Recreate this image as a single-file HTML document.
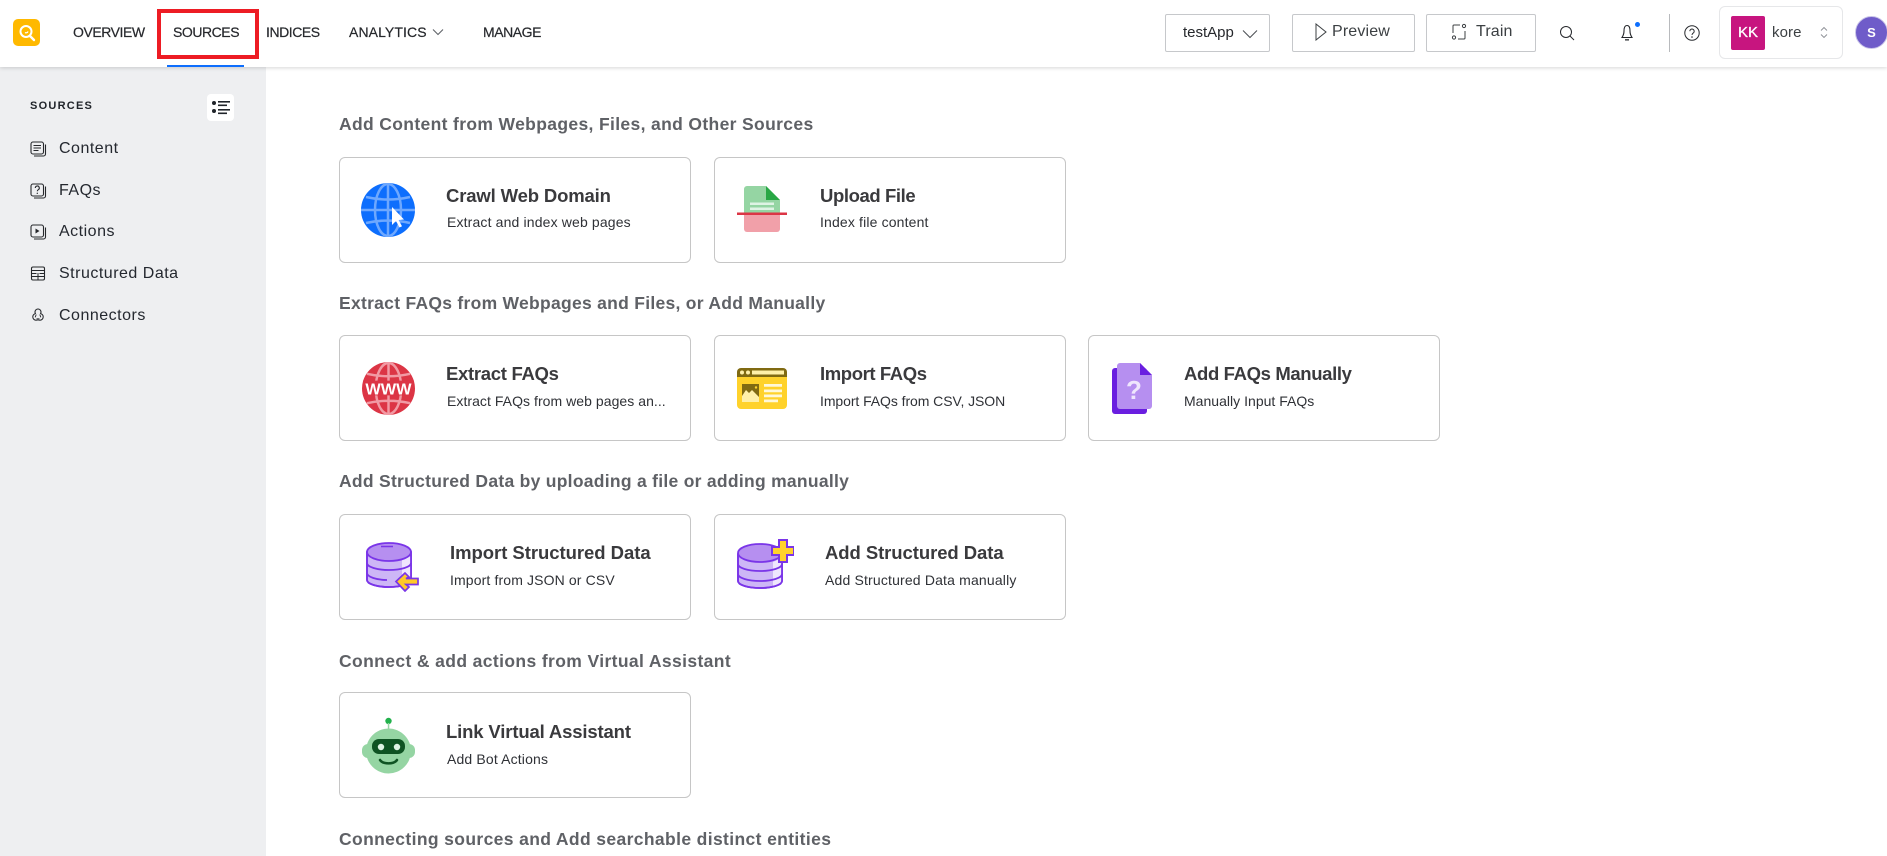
<!DOCTYPE html>
<html lang="en"><head><meta charset="utf-8"><title>Sources</title>
<style>
html,body{margin:0;padding:0;background:#fff}
body{width:1887px;height:856px;overflow:hidden;position:relative;font-family:"Liberation Sans",sans-serif;color:#202124}
div,span,svg{position:absolute;white-space:nowrap}
.hdr{left:0;top:0;width:1887px;height:67px;background:#fff;box-shadow:0 1px 4px rgba(0,0,0,.16);z-index:2}
.side{left:0;top:67px;width:266px;height:789px;background:#eeeff1}
.nav{top:23px;font-size:14px;line-height:18px;letter-spacing:-.45px;color:#26282c;-webkit-text-stroke:.2px #26282c}
.btn{border:1px solid #c6c8cb;border-radius:2px;box-sizing:border-box;height:38px;top:14px;background:#fff}
.bt{font-size:16px;line-height:20px;color:#3c4043;letter-spacing:.15px}
.si{left:59px;font-size:16px;line-height:20px;color:#24282f;letter-spacing:.5px}
.h{left:339px;font-size:17.5px;line-height:22px;font-weight:bold;color:#5f6166;letter-spacing:.35px}
.c{width:352px;height:106px;box-sizing:border-box;border:1px solid #c6c6c6;border-radius:6px;background:#fff}
.t{font-size:18.5px;line-height:24px;font-weight:bold;color:#3a3a3d;letter-spacing:-.15px}
.d{font-size:14px;line-height:18px;color:#2f3136;letter-spacing:.08px}
</style></head><body>

<div class="hdr">
  <svg style="left:13px;top:19px" width="27" height="27" viewBox="0 0 27 27"><rect width="27" height="27" rx="5" fill="#ffb900"/><circle cx="13" cy="12.500" r="5.500" fill="none" stroke="#fff" stroke-width="2"/><path d="M17 17l4 4" stroke="#fff" stroke-width="2.400" stroke-linecap="round"/><path d="M12 13.500a2 2 0 0 0 3-1" stroke="#fff" stroke-width="1.200" fill="none"/></svg>
  <span class="nav" style="left:73px">OVERVIEW</span>
  <span class="nav" style="left:173px">SOURCES</span>
  <span class="nav" style="left:266px">INDICES</span>
  <span class="nav" style="left:349px;letter-spacing:.1px">ANALYTICS</span>
  <svg style="left:432px;top:28px" width="12" height="8" viewBox="0 0 12 8"><path d="M1 1.500l5 5 5-5" fill="none" stroke="#5f6368" stroke-width="1.100"/></svg>
  <span class="nav" style="left:483px">MANAGE</span>
  <div style="left:167px;top:65px;width:77px;height:2px;background:#0d6efd"></div>
  <div style="left:157px;top:9px;width:102px;height:50px;box-sizing:border-box;border:4px solid #ed1c24"></div>

  <div class="btn" style="left:1165px;width:105px"></div>
  <span style="left:1183px;top:23px;font-size:15px;line-height:20px;color:#26282c">testApp</span>
  <svg style="left:1242px;top:29px" width="16" height="10" viewBox="0 0 16 10"><path d="M1 1.500l7 7 7-7" fill="none" stroke="#4a4d52" stroke-width="1"/></svg>

  <div class="btn" style="left:1292px;width:123px"></div>
  <svg style="left:1315px;top:23px" width="12" height="18" viewBox="0 0 12 18"><path d="M1 1v16l10-8z" fill="none" stroke="#3c4043" stroke-width="1"/></svg>
  <span class="bt" style="left:1332px;top:22px">Preview</span>

  <div class="btn" style="left:1426px;width:110px"></div>
  <svg style="left:1451px;top:23px" width="16" height="18" viewBox="0 0 16 18"><path d="M9 2H3a1 1 0 0 0-1 1v7M7 16h6a1 1 0 0 0 1-1V8" fill="none" stroke="#3c4043" stroke-width="1"/><circle cx="13" cy="3" r="1.600" fill="none" stroke="#3c4043"/><circle cx="3" cy="14.500" r="1.600" fill="none" stroke="#3c4043"/></svg>
  <span class="bt" style="left:1476px;top:22px">Train</span>

  <svg style="left:1559px;top:25px" width="16" height="16" viewBox="0 0 16 16"><circle cx="7" cy="7" r="5.500" fill="none" stroke="#26282c" stroke-width="1"/><path d="M11 11l4 4" stroke="#26282c" stroke-width="1"/></svg>
  <svg style="left:1619px;top:24px" width="16" height="18" viewBox="0 0 16 18"><path d="M8 1.500C5.500 1.500 5 4 5 7c0 3-1 5-2 6.500h10c-1-1.500-2-3.500-2-6.500 0-3-.5-5.500-3-5.500z" fill="none" stroke="#26282c" stroke-width="1.100"/><path d="M6 15.200h4v1.300H6z" fill="#26282c"/></svg>
  <div style="left:1635px;top:22px;width:5px;height:5px;border-radius:50%;background:#0d6efd"></div>
  <div style="left:1669px;top:14px;width:1px;height:38px;background:#b8babd"></div>
  <svg style="left:1684px;top:25px" width="16" height="16" viewBox="0 0 16 16"><circle cx="8" cy="8" r="7.200" fill="none" stroke="#26282c" stroke-width="1"/><path d="M5.800 6.200a2.200 2.200 0 1 1 3.400 1.900c-.8.500-1.200 1-1.200 1.900" fill="none" stroke="#26282c" stroke-width="1"/><circle cx="8" cy="12" r=".8" fill="#26282c"/></svg>

  <div style="left:1719px;top:6px;width:124px;height:53px;box-sizing:border-box;border:1px solid #e6e7e9;border-radius:6px;background:#fff"></div>
  <div style="left:1731px;top:16px;width:34px;height:34px;border-radius:2px;background:#c7157f;color:#fff;font-size:15px;line-height:34px;text-align:center;-webkit-text-stroke:.3px #fff">KK</div>
  <span style="left:1772px;top:23px;font-size:15px;line-height:20px;color:#3c4043;letter-spacing:.1px">kore</span>
  <svg style="left:1820px;top:26px" width="8" height="13" viewBox="0 0 8 13"><path d="M1 4.500l3-3 3 3M1 8.500l3 3 3-3" fill="none" stroke="#8a8d93" stroke-width=".9"/></svg>
  <div style="left:1855px;top:16px;width:33px;height:33px;box-sizing:border-box;border:1px solid #c8c3e8;border-radius:50%;background:#6f5cc9;color:#fff;font-size:13px;line-height:31px;text-align:center;font-weight:bold">S</div>
</div>

<div class="side"></div>
<span style="left:30px;top:98px;font-size:11px;line-height:16px;font-weight:bold;color:#1f2329;letter-spacing:1.250px">SOURCES</span>
<div style="left:207px;top:94px;width:27px;height:27px;border-radius:4px;background:#fff"></div>
<svg style="left:212px;top:100px" width="18" height="15" viewBox="0 0 18 15"><g fill="#1f2329"><circle cx="2" cy="3" r="2"/><circle cx="2" cy="11" r="2"/><rect x="6" y="1" width="12" height="1.600"/><rect x="6" y="4.500" width="9" height="1.600"/><rect x="6" y="9" width="12" height="1.600"/><rect x="6" y="12.500" width="9" height="1.600"/></g></svg>

<svg style="left:30px;top:141px" width="17" height="16" viewBox="0 0 17 16"><rect x="1" y="1" width="12.500" height="12" rx="2" fill="none" stroke="#26282c" stroke-width="1.100"/><path d="M15.500 3.500V13a2 2 0 0 1-2 2H4" fill="none" stroke="#26282c" stroke-width="1.100"/><path d="M3.500 4.500h7.500M3.500 7h7.500M3.500 9.500h5" stroke="#26282c" stroke-width="1.100"/></svg>
<span class="si" style="top:138.500px">Content</span>
<svg style="left:30px;top:183px" width="17" height="16" viewBox="0 0 17 16"><rect x="1" y="1" width="12.500" height="12" rx="2" fill="none" stroke="#26282c" stroke-width="1.100"/><path d="M15.500 3.500V13a2 2 0 0 1-2 2H4" fill="none" stroke="#26282c" stroke-width="1.100"/><path d="M5.300 5a2 2 0 1 1 3 1.700c-.7.400-1 .8-1 1.500" fill="none" stroke="#26282c" stroke-width="1.100"/><circle cx="7.300" cy="10.300" r=".7" fill="#26282c"/></svg>
<span class="si" style="top:180.500px">FAQs</span>
<svg style="left:30px;top:224px" width="17" height="16" viewBox="0 0 17 16"><rect x="1" y="1" width="12.500" height="12" rx="2" fill="none" stroke="#26282c" stroke-width="1.100"/><path d="M15.500 3.500V13a2 2 0 0 1-2 2H4" fill="none" stroke="#26282c" stroke-width="1.100"/><path d="M5.500 4.500v5l4-2.500z" fill="#26282c"/></svg>
<span class="si" style="top:221.500px">Actions</span>
<svg style="left:30px;top:266px" width="17" height="15" viewBox="0 0 17 15"><rect x="1.500" y="1" width="13" height="13" rx="1.500" fill="none" stroke="#26282c" stroke-width="1.100"/><path d="M1.500 4.500h13M1.500 10.500h13M1.500 7.500h5M9.500 7.500h5M8 7v7" stroke="#26282c" stroke-width="1"/></svg>
<span class="si" style="top:263.500px">Structured Data</span>
<svg style="left:30px;top:308px" width="16" height="15" viewBox="0 0 16 15"><path d="M8 1a3 3 0 0 1 2.600 4.500l.4.2a3.200 3.200 0 1 1-2.200 6.300H7.200A3.200 3.200 0 1 1 5 5.700l.4-.2A3 3 0 0 1 8 1z" fill="none" stroke="#26282c" stroke-width="1.050"/><path d="M6.200 6.500l-1 2.800M9.800 6.500l1 2.800M6.500 10.800h3" stroke="#26282c" stroke-width=".9" fill="none"/></svg>
<span class="si" style="top:305.500px">Connectors</span>

<div class="h" style="top:112.500px">Add Content from Webpages, Files, and Other Sources</div>
<div class="c" style="left:339px;top:157px"></div>
<svg style="left:361px;top:183px" width="54" height="54" viewBox="0 0 54 54"><circle cx="27" cy="27" r="27" fill="#0d6efd"/><g fill="none" stroke="#6ea8fe" stroke-width="2.500"><ellipse cx="27" cy="27" rx="13" ry="26"/><path d="M27 1v52M0 27h54M5 14q22 5 44 0M5 40q22-5 44 0"/></g><path d="M31 24v18l4-4 3.500 6.500 2.500-1.300-3.400-6.200 5.400-.5z" fill="#fff"/></svg>
<div class="t" style="left:446px;top:184px">Crawl Web Domain</div>
<div class="d" style="left:447px;top:213px;letter-spacing:.15px">Extract and index web pages</div>

<div class="c" style="left:714px;top:157px;width:352px"></div>
<svg style="left:737px;top:186px" width="50" height="46" viewBox="0 0 50 46"><path d="M7 28V3a3 3 0 0 1 3-3h19l14 14v14z" fill="#95d5a3"/><path d="M29 0l14 14H29z" fill="#28a745"/><path d="M7 28h36v15a3 3 0 0 1-3 3H10a3 3 0 0 1-3-3z" fill="#f1a0a9"/><path d="M13 16.500h24v2.500H13zM13 21.500h24v2.500H13z" fill="#dff3e4"/><rect x="0" y="26.500" width="50" height="2.500" fill="#dc3545"/></svg>
<div class="t" style="left:820px;top:184px;letter-spacing:-.4px">Upload File</div>
<div class="d" style="left:820px;top:213px;letter-spacing:.15px">Index file content</div>

<div class="h" style="top:291.500px;letter-spacing:.28px">Extract FAQs from Webpages and Files, or Add Manually</div>
<div class="c" style="left:339px;top:335px"></div>
<svg style="left:362px;top:362px" width="53" height="53" viewBox="0 0 54 54"><circle cx="27" cy="27" r="27" fill="#dc3545"/><g fill="none" stroke="#f19aa4" stroke-width="2.500"><ellipse cx="27" cy="27" rx="13" ry="26"/><path d="M27 1v52M5 12q22 5 44 0M5 42q22-5 44 0"/></g><rect x="1" y="19" width="52" height="15" fill="#dc3545"/><text x="27" y="33" text-anchor="middle" font-family="Liberation Sans" font-weight="bold" font-size="16" fill="#fff" textLength="47" lengthAdjust="spacingAndGlyphs">WWW</text></svg>
<div class="t" style="left:446px;top:362px;letter-spacing:-.3px">Extract FAQs</div>
<div class="d" style="left:447px;top:392px;letter-spacing:.05px">Extract FAQs from web pages an...</div>

<div class="c" style="left:714px;top:335px"></div>
<svg style="left:737px;top:368px" width="50" height="41" viewBox="0 0 50 41"><path d="M0 8h50v29a4 4 0 0 1-4 4H4a4 4 0 0 1-4-4z" fill="#ffd22b"/><path d="M4 0h42a4 4 0 0 1 4 4v5H0V4a4 4 0 0 1 4-4z" fill="#806a12"/><circle cx="5" cy="4.500" r="2" fill="#fff0a8"/><circle cx="11" cy="4.500" r="2" fill="#fff0a8"/><rect x="15" y="2.500" width="32" height="4" fill="#fff0a8"/><rect x="5" y="16" width="17" height="18" fill="#806a12"/><path d="M5 34V28l4-6 3 3 3-3 7 7v5z" fill="#fff0a8"/><circle cx="19" cy="19.500" r="1.200" fill="#ffd22b"/><path d="M27 16h18v2.700H27zM27 21.500h18v2.700H27zM27 26.500h18v2.700H27zM27 31.500h14v2.700H27z" fill="#fff8d8"/></svg>
<div class="t" style="left:820px;top:362px;letter-spacing:-.4px">Import FAQs</div>
<div class="d" style="left:820px;top:392px;letter-spacing:-.07px">Import FAQs from CSV, JSON</div>

<div class="c" style="left:1088px;top:335px"></div>
<svg style="left:1112px;top:363px" width="40" height="51" viewBox="0 0 40 51"><rect x="0" y="5" width="35" height="46" rx="3" fill="#6a1ee0"/><path d="M5 3a3 3 0 0 1 3-3h20l12 12v31a3 3 0 0 1-3 3H8a3 3 0 0 1-3-3z" fill="#b68ff0"/><path d="M28 0l12 12H28z" fill="#6a1ee0"/><text x="22" y="36" text-anchor="middle" font-family="Liberation Sans" font-weight="bold" font-size="26" fill="#efe6fd">?</text></svg>
<div class="t" style="left:1184px;top:362px;letter-spacing:-.36px">Add FAQs Manually</div>
<div class="d" style="left:1184px;top:392px;letter-spacing:.02px">Manually Input FAQs</div>

<div class="h" style="top:469.500px;letter-spacing:.28px">Add Structured Data by uploading a file or adding manually</div>
<div class="c" style="left:339px;top:514px"></div>
<svg style="left:365px;top:542px" width="54" height="50" viewBox="0 0 54 50"><g stroke="#7a35e8" stroke-width="1.800"><path d="M2 10v28c0 4 10 7 22 7s22-3 22-7V10z" fill="#cdb6f6"/><path d="M37 18v26c5-1 9-3 9-6V14z" fill="#efe6fd" stroke="none"/><path d="M2 10v28c0 4 10 7 22 7s22-3 22-7V10" fill="none"/><path d="M2 21c0 4 10 7 22 7s22-3 22-7M2 31c0 4 10 7 20 7" fill="none"/><ellipse cx="24" cy="10" rx="22" ry="9" fill="#b68ff0"/></g><path d="M16 4.500h12" stroke="#7a35e8" stroke-width="1.500" fill="none"/><path d="M31 39.500L40 31l4 4-3 1.500h12v6H41l3 2.500-4 4z" fill="#ffc928" stroke="#7a35e8" stroke-width="1.700"/></svg>
<div class="t" style="left:450px;top:541px;letter-spacing:-.04px">Import Structured Data</div>
<div class="d" style="left:450px;top:571px;letter-spacing:.13px">Import from JSON or CSV</div>

<div class="c" style="left:714px;top:514px"></div>
<svg style="left:736px;top:538px" width="58" height="52" viewBox="0 0 58 52"><g stroke="#7a35e8" stroke-width="1.800"><path d="M2 16v27c0 4 10 7 22 7s22-3 22-7V16z" fill="#cdb6f6"/><path d="M37 24v25c5-1 9-3 9-6V20z" fill="#efe6fd" stroke="none"/><path d="M2 16v27c0 4 10 7 22 7s22-3 22-7V16" fill="none"/><path d="M2 26c0 4 10 7 22 7s22-3 22-7M2 36c0 4 10 7 22 7s22-3 22-7" fill="none"/><ellipse cx="24" cy="15" rx="22" ry="9" fill="#b68ff0"/></g><path d="M43 2h8v7h7v8h-7v7h-8v-7h-7V9h7z" fill="#ffd22b" stroke="#7a35e8" stroke-width="2"/></svg>
<div class="t" style="left:825px;top:541px;letter-spacing:-.07px">Add Structured Data</div>
<div class="d" style="left:825px;top:571px;letter-spacing:.17px">Add Structured Data manually</div>

<div class="h" style="top:649.500px;letter-spacing:.38px">Connect &amp; add actions from Virtual Assistant</div>
<div class="c" style="left:339px;top:692px"></div>
<svg style="left:362px;top:717px" width="54" height="57" viewBox="0 0 54 57"><circle cx="26.500" cy="4" r="3.200" fill="#22b14c"/><rect x="25.800" y="6" width="1.500" height="8" fill="#95d5a3"/><rect x="0" y="27" width="53" height="14" rx="6" fill="#95d5a3"/><circle cx="26.500" cy="34" r="22.500" fill="#95d5a3"/><rect x="10" y="22" width="33" height="15" rx="7" fill="#0f5323"/><circle cx="19" cy="30" r="3.200" fill="#dff3e4"/><circle cx="35" cy="30" r="3.200" fill="#dff3e4"/><path d="M18 43c3 4.500 14 4.500 17 0" fill="none" stroke="#0f5323" stroke-width="2.500" stroke-linecap="round"/></svg>
<div class="t" style="left:446px;top:720px">Link Virtual Assistant</div>
<div class="d" style="left:447px;top:750px;letter-spacing:.15px">Add Bot Actions</div>

<div class="h" style="top:827.500px;letter-spacing:.37px">Connecting sources and Add searchable distinct entities</div>
</body></html>
